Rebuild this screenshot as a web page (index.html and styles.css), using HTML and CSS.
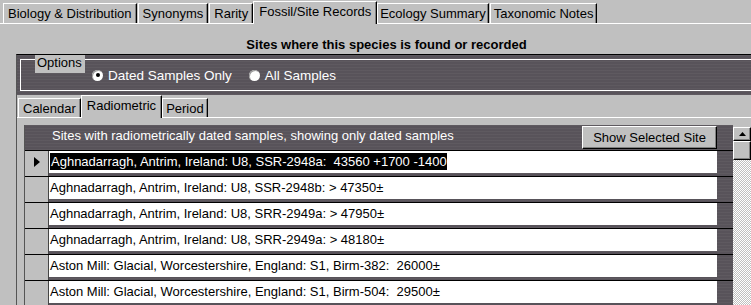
FILE: index.html
```html
<!DOCTYPE html>
<html lang="en">
<head>
  <meta charset="UTF-8">
  <title>Fossil/Site Records</title>
  <link rel="stylesheet" href="styles.css">
</head>
<body>
  <div class="tabs">
    <div class="tab">Biology &amp; Distribution</div>
    <div class="tab">Synonyms</div>
    <div class="tab">Rarity</div>
    <div class="tab active">Fossil/Site Records</div>
    <div class="tab">Ecology Summary</div>
    <div class="tab">Taxonomic Notes</div>
  </div>

  <div class="page">
    <h1 class="title">Sites where this species is found or recorded</h1>

    <div class="frame">
      <div class="options">
        <div class="options-box">
          <label class="radio-opt"><span class="radio checked"></span>Dated Samples Only</label>
          <label class="radio-opt"><span class="radio"></span>All Samples</label>
        </div>
        <div class="options-label">Options</div>
      </div>

      <div class="subtabs">
        <div class="subtab">Calendar</div>
        <div class="subtab active">Radiometric</div>
        <div class="subtab">Period</div>
      </div>

      <div class="subpage">
        <div class="grid">
          <div class="table">
            <div class="grid-header">
              <span class="grid-caption">Sites with radiometrically dated samples, showing only dated samples</span>
              <button class="btn">Show Selected Site</button>
            </div>

            <div class="row">
              <div class="selector">
                <svg width="6" height="10" viewBox="0 0 6 10"><polygon points="0,0 6,5 0,10" fill="#000"/></svg>
              </div>
              <div class="data"><div class="cell"><span class="selected">Aghnadarragh, Antrim, Ireland: U8, SSR-2948a:&nbsp; 43560 +1700 -1400</span></div></div>
            </div>
            <div class="row">
              <div class="selector"></div>
              <div class="data"><div class="cell">Aghnadarragh, Antrim, Ireland: U8, SSR-2948b: &gt; 47350±</div></div>
            </div>
            <div class="row">
              <div class="selector"></div>
              <div class="data"><div class="cell">Aghnadarragh, Antrim, Ireland: U8, SRR-2949a: &gt; 47950±</div></div>
            </div>
            <div class="row">
              <div class="selector"></div>
              <div class="data"><div class="cell">Aghnadarragh, Antrim, Ireland: U8, SRR-2949a: &gt; 48180±</div></div>
            </div>
            <div class="row">
              <div class="selector"></div>
              <div class="data"><div class="cell">Aston Mill: Glacial, Worcestershire, England: S1, Birm-382:&nbsp; 26000±</div></div>
            </div>
            <div class="row">
              <div class="selector"></div>
              <div class="data"><div class="cell">Aston Mill: Glacial, Worcestershire, England: S1, Birm-504:&nbsp; 29500±</div></div>
            </div>
          </div>

          <div class="scrollbar">
            <div class="scroll-btn">
              <svg width="7" height="4" viewBox="0 0 7 4"><polygon points="0,4 3.5,0 7,4" fill="#000"/></svg>
            </div>
            <div class="scroll-thumb"></div>
            <div class="scroll-track"></div>
          </div>
        </div>
      </div>
    </div>
  </div>
</body>
</html>
```

FILE: styles.css
```css
html, body {
  margin: 0;
  padding: 0;
}

body {
  width: 751px;
  height: 305px;
  overflow: hidden;
  background-color: #c0c0c0;
  color: #000;
  font-family: "Liberation Sans", Arial, sans-serif;
  font-size: 13px;
}

/* top tab strip */
.tabs {
  display: flex;
  align-items: flex-end;
  height: 23px;
  padding-left: 3px;
  position: relative;
  z-index: 2;
}

.tab {
  height: 19px;
  line-height: 19px;
  padding: 0 4px;
  margin-right: 1px;
  border-top: 1px solid #fff;
  border-left: 1px solid #fff;
  border-right: 1px solid #000;
  box-shadow: inset -1px 0 #808080;
  white-space: nowrap;
}

.tab.active {
  height: 22px;
  line-height: 19px;
  margin: 0 -1px -1px -1px;
  padding: 0 5px;
  background-color: #c0c0c0;
  position: relative;
}

.tab.active + .tab {
  margin-left: 1px;
  padding: 0 2px;
}

.tab.active + .tab + .tab {
  padding: 0 3px;
}

.page {
  border-top: 1px solid #fff;
}

.title {
  margin: 0;
  padding: 12px 0 1px 22px;
  line-height: 17px;
  font-size: 13px;
  font-weight: bold;
  text-align: center;
}

/* frame holding options, subtabs and grid */
.frame {
  margin-left: 16px;
  border-left: 1px solid #555;
  border-top: 1px solid #000;
}

.options {
  position: relative;
  padding: 4px 0 4px 3px;
  background-color: #58535a;
  background-image: repeating-linear-gradient(0deg, rgba(255,255,255,0.04) 0 1px, transparent 1px 3px);
}

.options-box {
  display: flex;
  align-items: center;
  gap: 17px;
  height: 30px;
  padding-left: 71px;
  border: 1px solid #fff;
  border-right: none;
}

.radio-opt {
  display: flex;
  align-items: center;
  color: #fff;
  font-size: 13.5px;
}

.radio {
  position: relative;
  width: 11px;
  height: 11px;
  margin-right: 5px;
  border-radius: 50%;
  background: #fff;
  box-shadow: inset 1px 1px 0 #9a9a9a;
}

.radio.checked::after {
  content: "";
  position: absolute;
  left: 3.5px;
  top: 3.5px;
  width: 4px;
  height: 4px;
  border-radius: 50%;
  background: #000;
}

.options-label {
  position: absolute;
  left: 18px;
  top: 0;
  width: 48px;
  height: 18px;
  padding-left: 2px;
  line-height: 16px;
  background-color: #c0c0c0;
}

/* radiometric sub tabs */
.subtabs {
  display: flex;
  align-items: flex-end;
  height: 22px;
  padding-left: 1px;
  position: relative;
  z-index: 1;
}

.subtab {
  height: 18px;
  line-height: 20px;
  padding: 0 4px;
  border-top: 1px solid #fff;
  border-left: 1px solid #fff;
  border-right: 1px solid #000;
  box-shadow: inset -1px 0 #808080;
}

.subtab.active {
  height: 22px;
  line-height: 19px;
  margin-bottom: -1px;
  padding: 0 5px;
  background-color: #c0c0c0;
}

.subtab:last-child {
  padding: 0 3px;
}

.subpage {
  padding: 7px 0 0 7px;
  border-top: 1px solid #fff;
}

/* grid */
.grid {
  display: flex;
  border-left: 1px solid #555;
}

.table {
  flex: 1;
  background-color: #58535a;
  background-image: repeating-linear-gradient(0deg, rgba(255,255,255,0.04) 0 1px, transparent 1px 3px);
}

.grid-header {
  display: flex;
  align-items: flex-start;
  justify-content: space-between;
  height: 25px;
}

.grid-caption {
  padding: 3px 0 0 27px;
  line-height: 16px;
  color: #fff;
}

.btn {
  height: 23px;
  width: 135px;
  margin: 1px 16px 0 0;
  padding: 0;
  font-family: "Liberation Sans", Arial, sans-serif;
  font-size: 13px;
  color: #000;
  background: #c0c0c0;
  border: 1px solid;
  border-color: #fff #000 #000 #fff;
  box-shadow: inset -1px -1px 0 #808080;
}

.row {
  display: flex;
  height: 25px;
  border-top: 1px solid #000;
}

.selector {
  display: flex;
  align-items: center;
  justify-content: center;
  width: 24px;
  padding-bottom: 3px;
  box-sizing: border-box;
  background-color: #c0c0c0;
  border-right: 1px solid #444;
}

.data {
  flex: 1;
  padding-right: 16px;
}

.cell {
  height: 22px;
  line-height: 22px;
  padding-left: 1px;
  background: #fff;
  white-space: nowrap;
  overflow: hidden;
}

.selected {
  padding: 1px 0 1px 1px;
  background: #000;
  color: #fff;
}

/* scrollbar */
.scrollbar {
  display: flex;
  flex-direction: column;
  width: 18px;
  padding-top: 2px;
  background: #c0c0c0;
}

.scroll-btn,
.scroll-thumb {
  box-sizing: border-box;
  background: #c0c0c0;
  border: 1px solid;
  border-color: #fff #000 #000 #fff;
  box-shadow: inset -1px -1px 0 #808080;
}

.scroll-btn {
  display: flex;
  align-items: center;
  justify-content: center;
  height: 14px;
}

.scroll-thumb {
  height: 19px;
}

.scroll-track {
  flex: 1;
  height: 200px;
  background-image: conic-gradient(#fff 25%, #c0c0c0 0 50%, #fff 0 75%, #c0c0c0 0);
  background-size: 2px 2px;
}
```
